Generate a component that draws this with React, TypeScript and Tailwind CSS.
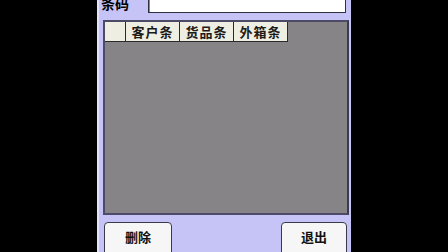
const cols = ['客户条', '货品条', '外箱条'];

export default function App() {
  return (
    <div className="flex h-[252px] w-[448px] overflow-hidden bg-black" style={{ fontFamily: '"Noto Sans CJK SC", sans-serif' }}>
      <div className="ml-[97px] flex h-full w-[254px] flex-col overflow-hidden border-l-2 border-[#e4e2fa] bg-[#c6c4f6]">
        <div className="-mt-[7px] flex h-[20px] shrink-0 items-center">
          <span className="ml-[2px] w-[47px] text-[14px] font-bold leading-none text-black">条码</span>
          <div className="h-full w-[198px] border border-[#303040] border-t-0 bg-white shadow-[inset_1px_0_0_#888]" />
        </div>
        <div className="mt-[7px] ml-[4px] flex h-[195px] w-[246px] shrink-0 flex-col border-2 border-[#4c4a66] border-r-[#3a3a50] bg-[#878487]">
          <div className="flex h-[20px] shrink-0">
            <div className="w-[21px] border-r border-b border-[#2a2a2a] bg-[#efeee2]" />
            {cols.map((c) => (
              <div
                key={c}
                className="flex w-[54px] items-center justify-center border-r border-b border-[#2a2a2a] bg-[#efeee2] text-[13px] font-bold leading-none tracking-[1px] text-[#1a1a1a]"
              >
                {c}
              </div>
            ))}
          </div>
        </div>
        <div className="mt-[7px] flex justify-between pl-[5px] pr-[4px]">
          <button className="flex h-[36px] w-[68px] items-start justify-center rounded-[4px] border border-[#3a3a4a] bg-[#f6f6f6] pt-[7px] text-[13px] font-bold leading-none text-[#111]">
            删除
          </button>
          <button className="flex h-[36px] w-[66px] items-start justify-center rounded-[4px] border border-[#3a3a4a] bg-[#f6f6f6] pt-[7px] text-[13px] font-bold leading-none text-[#111]">
            退出
          </button>
        </div>
      </div>
    </div>
  );
}
